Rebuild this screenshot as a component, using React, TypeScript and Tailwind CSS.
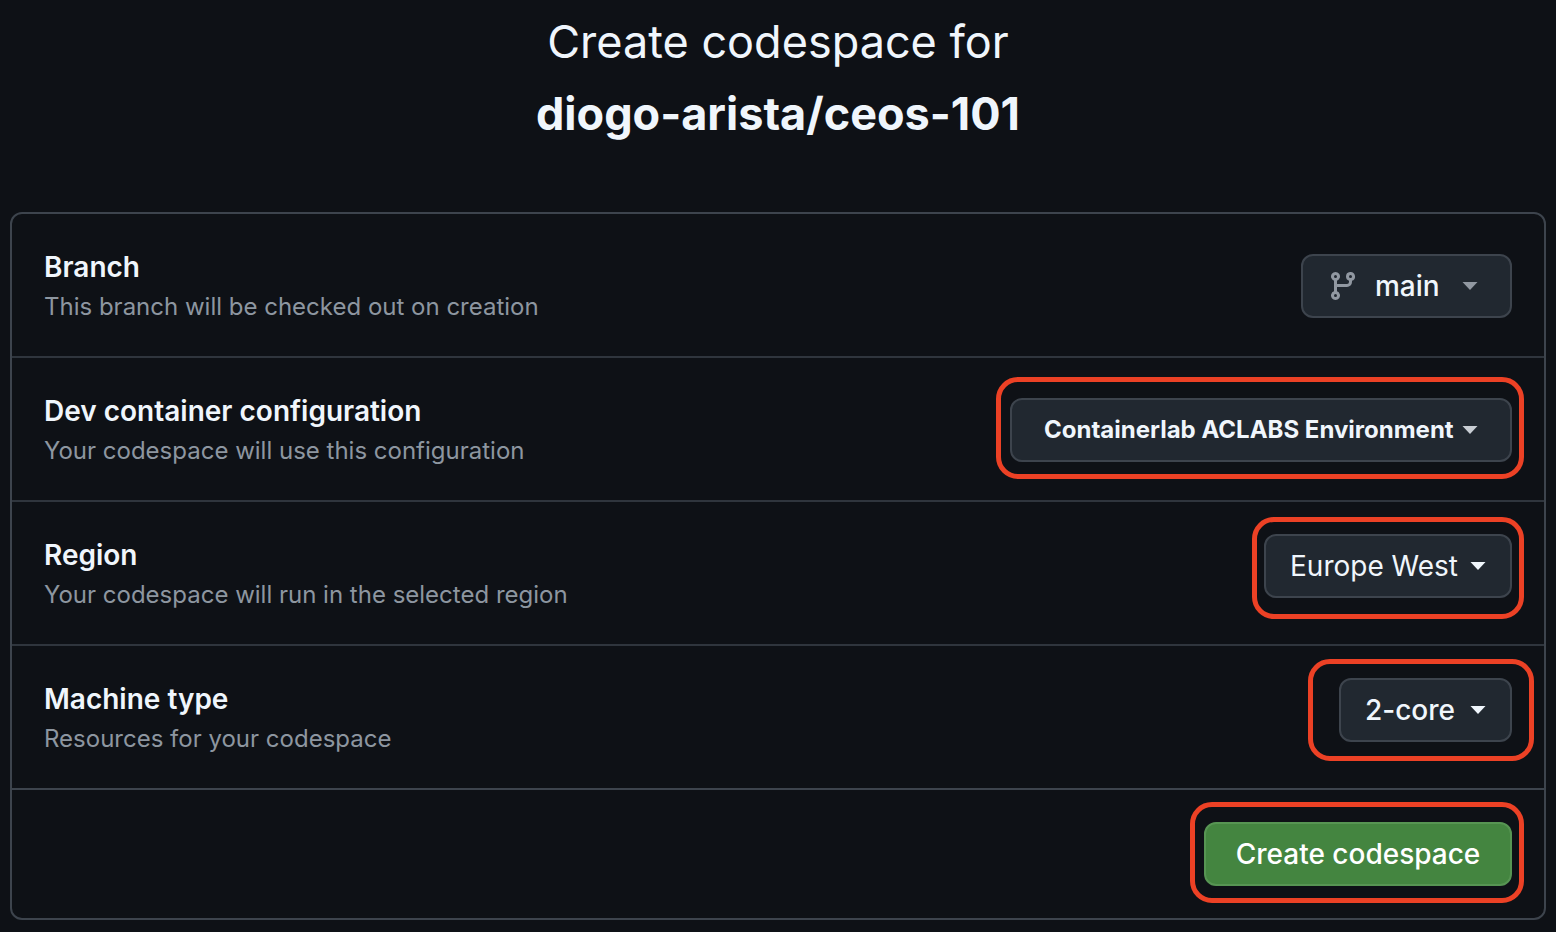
import React, { useState } from "react";

interface SettingRowProps {
  id: string;
  title: string;
  description: string;
  className?: string;
  children: React.ReactNode;
}

const SettingRow: React.FC<SettingRowProps> = ({ id, title, description, className = "", children }) => (
  <div className={`flex justify-between gap-8 border-b-2 px-8 pt-8 pb-[30px] ${className}`}>
    <div>
      <label htmlFor={id} className="block text-[28px] leading-[42px] font-semibold text-[#f0f6fc]">
        {title}
      </label>
      <p id={`${id}-hint`} className="text-[24px] leading-[38px] text-[#8d96a0]">
        {description}
      </p>
    </div>
    {children}
  </div>
);

interface DropdownProps {
  id: string;
  options: string[];
  className: string;
  caretClassName: string;
  icon?: React.ReactNode;
  children?: React.ReactNode;
}

const Dropdown: React.FC<DropdownProps> = ({ id, options, className, caretClassName, icon, children }) => {
  const [value, setValue] = useState(options[0]);

  return (
    <div className="relative grid shrink-0 items-center">
      <select
        id={id}
        aria-describedby={`${id}-hint`}
        value={value}
        onChange={(e) => setValue(e.target.value)}
        className={`col-start-1 row-start-1 h-16 cursor-pointer appearance-none rounded-xl border-2 border-[#3d444d] bg-[#212830] text-[#f0f6fc] ${className}`}
      >
        {options.map((option) => (
          <option key={option}>{option}</option>
        ))}
      </select>
      {icon}
      <svg
        viewBox="0 0 16 8"
        aria-hidden="true"
        className={`pointer-events-none col-start-1 row-start-1 h-2 w-4 justify-self-end ${caretClassName}`}
      >
        <path d="M0.5 0h15L8 8z" fill="currentColor" />
      </svg>
      {children}
    </div>
  );
};

// Red marker drawn around a control
const Highlight: React.FC<{ className: string }> = ({ className }) => (
  <span
    aria-hidden="true"
    className={`pointer-events-none absolute rounded-[22px] border-5 border-[#ec4125] ${className}`}
  />
);

const BranchIcon: React.FC = () => (
  <svg
    viewBox="0 0 16 16"
    aria-hidden="true"
    className="pointer-events-none col-start-1 row-start-1 ml-[26px] size-8 text-[#9198a1]"
  >
    <path
      fill="currentColor"
      d="M9.5 3.25a2.25 2.25 0 1 1 3 2.122V6A2.5 2.5 0 0 1 10 8.5H5v2.128a2.251 2.251 0 1 1-1.5 0V5.372a2.25 2.25 0 1 1 1.5 0V7h5a1 1 0 0 0 1-1v-.628A2.25 2.25 0 0 1 9.5 3.25Zm-6 0a.75.75 0 1 0 1.5 0 .75.75 0 0 0-1.5 0Zm8.25-.75a.75.75 0 1 0 0 1.5.75.75 0 0 0 0-1.5ZM4.25 12a.75.75 0 1 0 0 1.5.75.75 0 0 0 0-1.5Z"
    />
  </svg>
);

const App: React.FC = () => {
  return (
    <div className="min-h-screen bg-[#0e1116] px-[10px] pt-[6px] pb-3 font-[Inter,sans-serif]">
      <h1 className="pb-[62px] text-center text-[45px] leading-[72px] font-normal text-[#f0f6fc]">
        Create codespace for
        <br />
        <strong className="font-bold">diogo-arista/ceos-101</strong>
      </h1>

      <form onSubmit={(e) => e.preventDefault()} className="rounded-xl border-2 border-[#3d444d]">
        <SettingRow
          id="branch"
          title="Branch"
          description="This branch will be checked out on creation"
          className="items-center border-[#2f353d]"
        >
          <Dropdown
            id="branch"
            options={["main"]}
            className="w-[211px] pl-[72px] text-[28px] font-medium"
            caretClassName="mr-[34px] text-[#9198a1]"
            icon={<BranchIcon />}
          />
        </SettingRow>

        <SettingRow
          id="devcontainer"
          title="Dev container configuration"
          description="Your codespace will use this configuration"
          className="items-center border-[#2f353d]"
        >
          <Dropdown
            id="devcontainer"
            options={["Containerlab ACLABS Environment"]}
            className="w-[502px] pl-8 text-[24px] font-bold"
            caretClassName="mr-[34px] text-[#c8cdd3]"
          >
            <Highlight className="-top-[21px] -right-3 -bottom-[17px] -left-[14px]" />
          </Dropdown>
        </SettingRow>

        <SettingRow
          id="region"
          title="Region"
          description="Your codespace will run in the selected region"
          className="items-start border-[#2f353d]"
        >
          <Dropdown
            id="region"
            options={["Europe West"]}
            className="w-[248px] pl-6 text-[28px] font-normal"
            caretClassName="mr-[26px] text-[#f0f6fc]"
          >
            <Highlight className="-top-[17px] -right-3 -bottom-[21px] -left-3" />
          </Dropdown>
        </SettingRow>

        <SettingRow
          id="machine"
          title="Machine type"
          description="Resources for your codespace"
          className="items-start border-[#3d444d]"
        >
          <Dropdown
            id="machine"
            options={["2-core"]}
            className="w-[173px] pl-6 text-[28px] font-medium"
            caretClassName="mr-[26px] text-[#f0f6fc]"
          >
            <Highlight className="-top-[19px] -right-[22px] -bottom-[19px] -left-[31px]" />
          </Dropdown>
        </SettingRow>

        <div className="flex justify-end p-8">
          <div className="relative">
            <button
              type="submit"
              className="h-16 w-[308px] cursor-pointer rounded-xl border-2 border-[#579553] bg-[#448540] text-[28px] font-medium text-white"
            >
              Create codespace
            </button>
            <Highlight className="-top-5 -right-3 -bottom-[17px] -left-[14px]" />
          </div>
        </div>
      </form>
    </div>
  );
};

export default App;
